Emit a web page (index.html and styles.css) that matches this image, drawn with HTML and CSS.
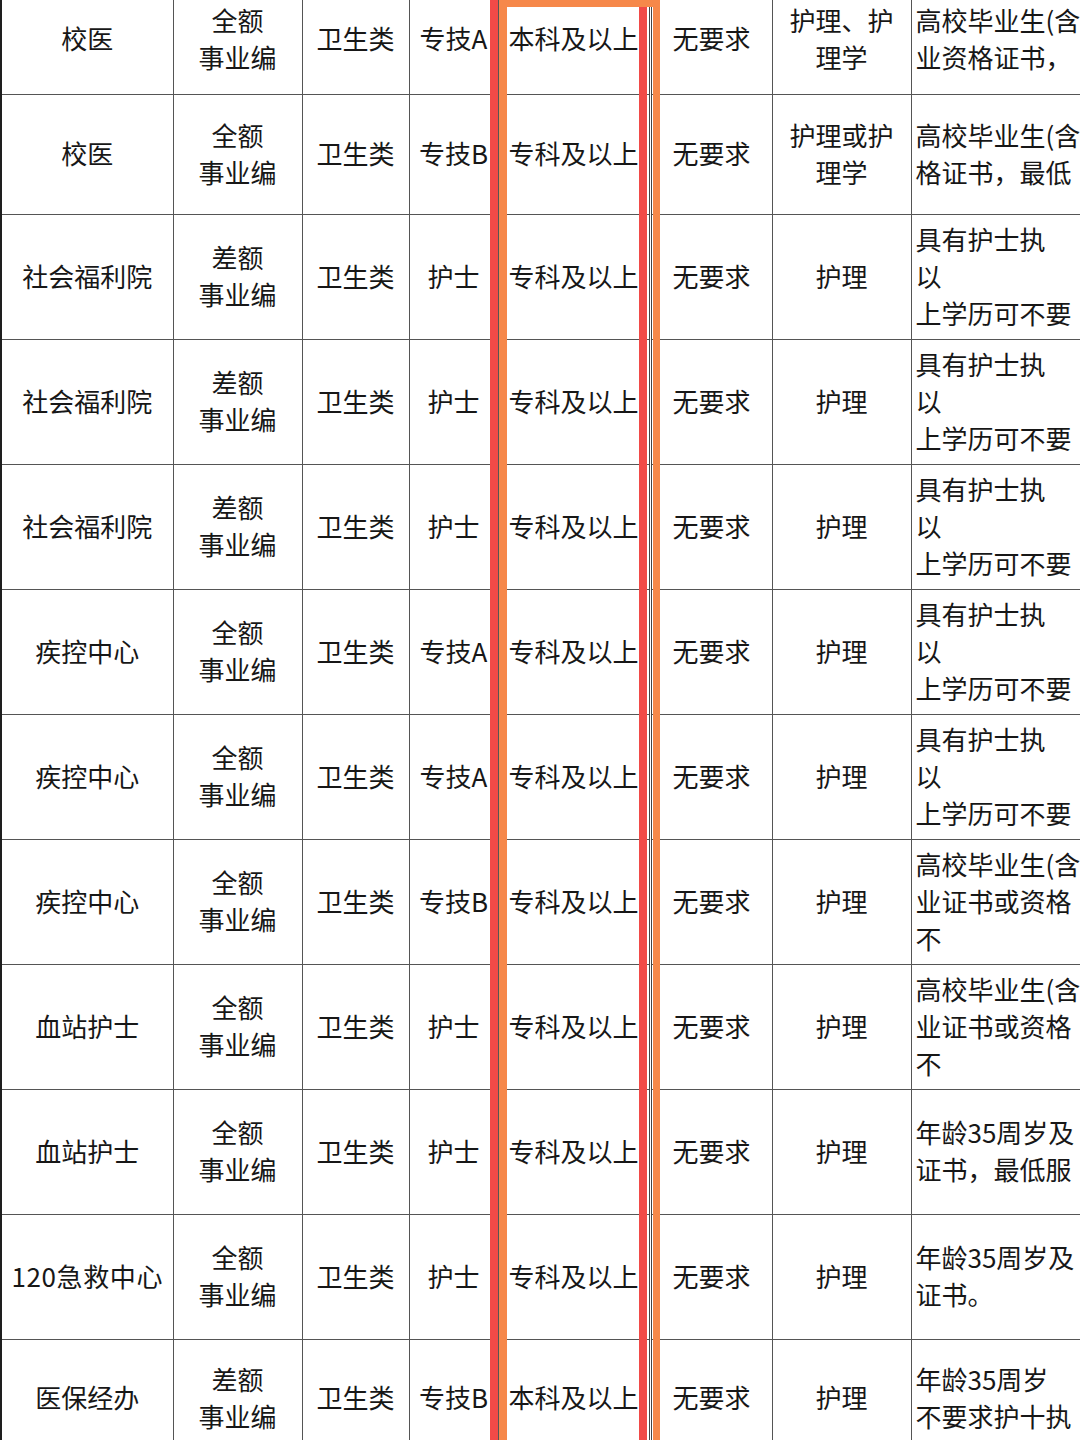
FILE: index.html
```html
<!DOCTYPE html>
<html lang="zh-CN">
<head>
<meta charset="utf-8">
<title>岗位表</title>
<link rel="stylesheet" href="styles.css">
</head>
<body>
<div class="sheet">
  <table class="grid">
    <colgroup>
      <col class="c1"><col class="c2"><col class="c3"><col class="c4"><col class="c5"><col class="c6"><col class="c7"><col class="c8">
    </colgroup>
    <tbody>
      <tr class="r-first">
        <td>校医</td><td>全额<br>事业编</td><td>卫生类</td><td class="nw">专技A</td><td>本科及以上</td><td class="dbl">无要求</td><td>护理、护<br>理学</td><td class="note">高校毕业生(含<br>业资格证书，</td>
      </tr>
      <tr class="r-second">
        <td>校医</td><td>全额<br>事业编</td><td>卫生类</td><td class="nw">专技B</td><td>专科及以上</td><td class="dbl">无要求</td><td>护理或护<br>理学</td><td class="note">高校毕业生(含<br>格证书，最低</td>
      </tr>
      <tr>
        <td>社会福利院</td><td>差额<br>事业编</td><td>卫生类</td><td>护士</td><td>专科及以上</td><td class="dbl">无要求</td><td>护理</td><td class="note">具有护士执<br>以<br>上学历可不要</td>
      </tr>
      <tr>
        <td>社会福利院</td><td>差额<br>事业编</td><td>卫生类</td><td>护士</td><td>专科及以上</td><td class="dbl">无要求</td><td>护理</td><td class="note">具有护士执<br>以<br>上学历可不要</td>
      </tr>
      <tr>
        <td>社会福利院</td><td>差额<br>事业编</td><td>卫生类</td><td>护士</td><td>专科及以上</td><td class="dbl">无要求</td><td>护理</td><td class="note">具有护士执<br>以<br>上学历可不要</td>
      </tr>
      <tr>
        <td>疾控中心</td><td>全额<br>事业编</td><td>卫生类</td><td class="nw">专技A</td><td>专科及以上</td><td class="dbl">无要求</td><td>护理</td><td class="note">具有护士执<br>以<br>上学历可不要</td>
      </tr>
      <tr>
        <td>疾控中心</td><td>全额<br>事业编</td><td>卫生类</td><td class="nw">专技A</td><td>专科及以上</td><td class="dbl">无要求</td><td>护理</td><td class="note">具有护士执<br>以<br>上学历可不要</td>
      </tr>
      <tr>
        <td>疾控中心</td><td>全额<br>事业编</td><td>卫生类</td><td class="nw">专技B</td><td>专科及以上</td><td class="dbl">无要求</td><td>护理</td><td class="note">高校毕业生(含<br>业证书或资格<br>不</td>
      </tr>
      <tr>
        <td>血站护士</td><td>全额<br>事业编</td><td>卫生类</td><td>护士</td><td>专科及以上</td><td class="dbl">无要求</td><td>护理</td><td class="note">高校毕业生(含<br>业证书或资格<br>不</td>
      </tr>
      <tr>
        <td>血站护士</td><td>全额<br>事业编</td><td>卫生类</td><td>护士</td><td>专科及以上</td><td class="dbl">无要求</td><td>护理</td><td class="note">年龄35周岁及<br>证书，最低服</td>
      </tr>
      <tr>
        <td class="nw wide">120急救中心</td><td>全额<br>事业编</td><td>卫生类</td><td>护士</td><td>专科及以上</td><td class="dbl">无要求</td><td>护理</td><td class="note">年龄35周岁及<br>证书。</td>
      </tr>
      <tr class="r-last">
        <td>医保经办</td><td>差额<br>事业编</td><td>卫生类</td><td class="nw">专技B</td><td>本科及以上</td><td class="dbl">无要求</td><td>护理</td><td class="note">年龄35周岁<br>不要求护十执</td>
      </tr>
    </tbody>
  </table>
  <div class="mark mark-red"></div>
  <div class="mark mark-orange"></div>
</div>
</body>
</html>
```

FILE: styles.css
```css
html, body {
  margin: 0;
  padding: 0;
  background: #ffffff;
}

.sheet {
  position: relative;
  width: 1080px;
  height: 1440px;
  overflow: hidden;
  background: #ffffff;
}

.grid {
  border-collapse: collapse;
  table-layout: fixed;
  width: 1320px;
  margin-top: -16px;
  font-family: "Noto Sans CJK SC", "Noto Sans", sans-serif;
  font-size: 26px;
  line-height: 37px;
  color: #171717;
}

.c1 { width: 172px; }
.c2 { width: 129px; }
.c3 { width: 107px; }
.c4 { width: 89px; }
.c5 { width: 152px; }
.c6 { width: 122px; }
.c7 { width: 139px; }
.c8 { width: 410px; }

.grid td {
  border: 1px solid #555555;
  padding: 0 0 4px 0;
  text-align: center;
  vertical-align: middle;
  overflow: hidden;
  height: 125px;
  box-sizing: border-box;
}

.grid td:first-child {
  border-left: 2px solid #1e1e1e;
}

.grid tr.r-first td { height: 110px; }
.grid tr.r-second td { height: 120px; }
.grid tr.r-last td { height: 118px; }

.grid td.nw {
  white-space: nowrap;
  overflow: visible;
}

.grid td.wide {
  letter-spacing: 0.6px;
}

.grid td.dbl {
  border-left: 3px double #444444;
}

.grid td.note {
  text-align: left;
  padding-left: 4px;
  white-space: nowrap;
}

.mark {
  position: absolute;
  box-sizing: border-box;
  pointer-events: none;
}

.mark-red {
  left: 490px;
  top: -40px;
  width: 157px;
  height: 1600px;
  border: 8px solid #f14a47;
}

.mark-orange {
  left: 499px;
  top: 0;
  width: 161px;
  height: 1600px;
  border: 7px solid #f6884a;
  border-left-width: 8px;
}
```
